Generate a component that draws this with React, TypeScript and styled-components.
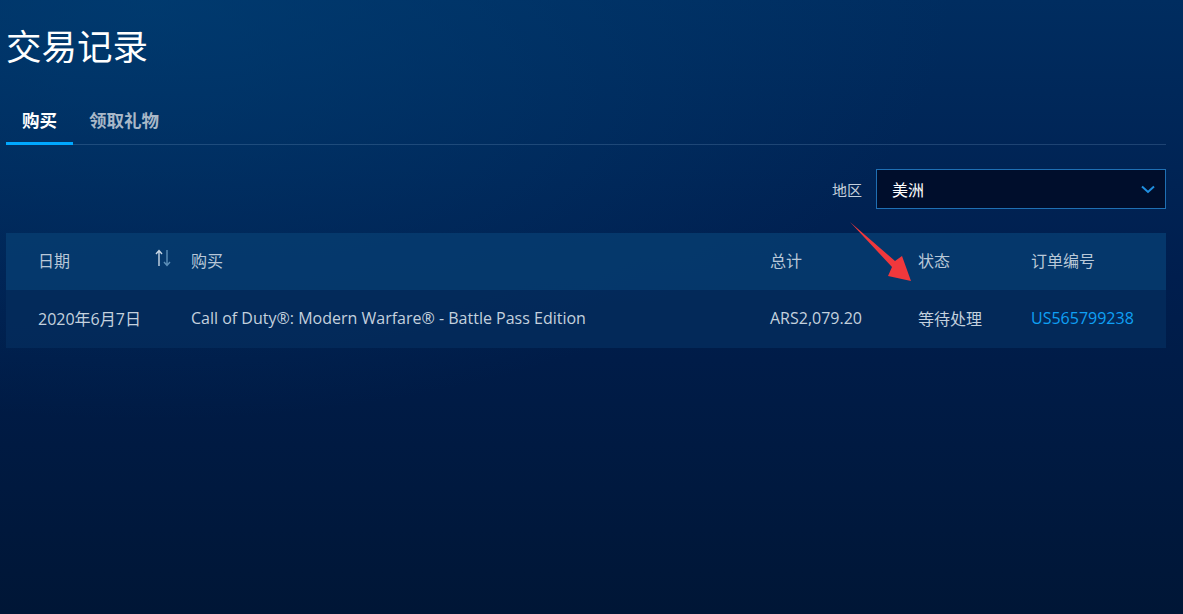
import React from "react";
import styled, { createGlobalStyle } from "styled-components";

const Global = createGlobalStyle`
  html, body { margin: 0; padding: 0; height: 100%; }
  body {
    font-family: "Open Sans", "Noto Sans CJK SC", sans-serif;
    background: #001c45;
  }
`;

const Page = styled.div`
  position: relative;
  width: 1183px;
  height: 614px;
  overflow: hidden;
  box-sizing: border-box;
  padding: 0 17px 0 6px;
  background:
    radial-gradient(ellipse 800px 420px at 150px 0px, rgba(0, 66, 120, 0.6), rgba(0, 66, 120, 0) 100%),
    linear-gradient(180deg, #002d60 0%, #001e4e 45%, #001636 100%);
`;

const Title = styled.h1`
  margin: 0;
  padding-top: 21px;
  font-family: "Noto Sans CJK SC", sans-serif;
  font-weight: 400;
  font-size: 35.5px;
  line-height: 48px;
  color: #ffffff;
`;

const Tabs = styled.div`
  display: flex;
  margin-top: 40px;
  border-bottom: 1px solid rgba(120, 160, 200, 0.25);
`;

const Tab = styled.div<{ $active?: boolean }>`
  font-family: "Noto Sans CJK SC", sans-serif;
  font-weight: 700;
  font-size: 17.5px;
  line-height: 22px;
  padding: 0 16px 11px;
  color: ${(p) => (p.$active ? "#ffffff" : "#a9b8c8")};
  border-bottom: 3px solid ${(p) => (p.$active ? "#00a8ff" : "transparent")};
  margin-bottom: -1px;
`;

const FilterRow = styled.div`
  display: flex;
  justify-content: flex-end;
  align-items: center;
  gap: 14px;
  margin-top: 24px;
`;

const Label = styled.span`
  font-family: "Noto Sans CJK SC", sans-serif;
  font-size: 15px;
  color: #c3cfdc;
`;

const Select = styled.div`
  box-sizing: border-box;
  width: 290px;
  height: 40px;
  display: flex;
  align-items: center;
  justify-content: space-between;
  padding: 0 8px 0 15px;
  background: #000e2c;
  border: 1px solid #1f6fb3;
  font-family: "Noto Sans CJK SC", sans-serif;
  font-size: 16px;
  color: #ffffff;
`;

const Table = styled.div`
  margin-top: 24px;
  width: 1160px;
`;

const Row = styled.div<{ $head?: boolean }>`
  display: grid;
  grid-template-columns: 117px 36px 579px 148px 113px 1fr;
  align-items: center;
  height: ${(p) => (p.$head ? "57px" : "58px")};
  padding-left: 32px;
  background: ${(p) => (p.$head ? "rgba(6, 60, 112, 0.85)" : "rgba(3, 44, 92, 0.85)")};
  font-size: 16px;
  color: ${(p) => (p.$head ? "#b9c8d8" : "#c4d1de")};
`;

const Cell = styled.div<{ $link?: boolean; $cjk?: boolean }>`
  font-family: ${(p) => (p.$cjk ? '"Noto Sans CJK SC", sans-serif' : '"Open Sans", "Noto Sans CJK SC", sans-serif')};
  color: ${(p) => (p.$link ? "#0fa0f5" : "inherit")};
  white-space: nowrap;
  margin-top: -3px;
`;

const Arrow = styled.svg`
  position: absolute;
  left: 846px;
  top: 218px;
`;

export default function App() {
  return (
    <>
      <Global />
      <Page>
        <Title>交易记录</Title>
        <Tabs>
          <Tab $active>购买</Tab>
          <Tab>领取礼物</Tab>
        </Tabs>
        <FilterRow>
          <Label>地区</Label>
          <Select>
            <span>美洲</span>
            <svg width="18" height="18" viewBox="0 0 18 18">
              <path d="M3 6.5 L9 12 L15 6.5" fill="none" stroke="#1f8fe0" strokeWidth="2" />
            </svg>
          </Select>
        </FilterRow>
        <Table>
          <Row $head>
            <Cell $cjk>日期</Cell>
            <Cell>
              <svg width="16" height="18" viewBox="0 0 16 18">
                <path d="M4 17 V2 M1 5 L4 1.5 L7 5" fill="none" stroke="#c9d7e5" strokeWidth="1.4" />
                <path d="M12 1 V16 M9 13 L12 16.5 L15 13" fill="none" stroke="#5d8fb8" strokeWidth="1.4" />
              </svg>
            </Cell>
            <Cell $cjk>购买</Cell>
            <Cell $cjk>总计</Cell>
            <Cell $cjk>状态</Cell>
            <Cell $cjk>订单编号</Cell>
          </Row>
          <Row>
            <Cell>2020年6月7日</Cell>
            <Cell />
            <Cell>Call of Duty®: Modern Warfare® - Battle Pass Edition</Cell>
            <Cell>ARS2,079.20</Cell>
            <Cell $cjk>等待处理</Cell>
            <Cell $link>US565799238</Cell>
          </Row>
        </Table>
        <Arrow width="70" height="68" viewBox="0 0 70 68">
          <path d="M4 4 L49 43 L56 38 L65 63 L42 58 L46 49 Z" fill="#f0383c" />
        </Arrow>
      </Page>
    </>
  );
}
